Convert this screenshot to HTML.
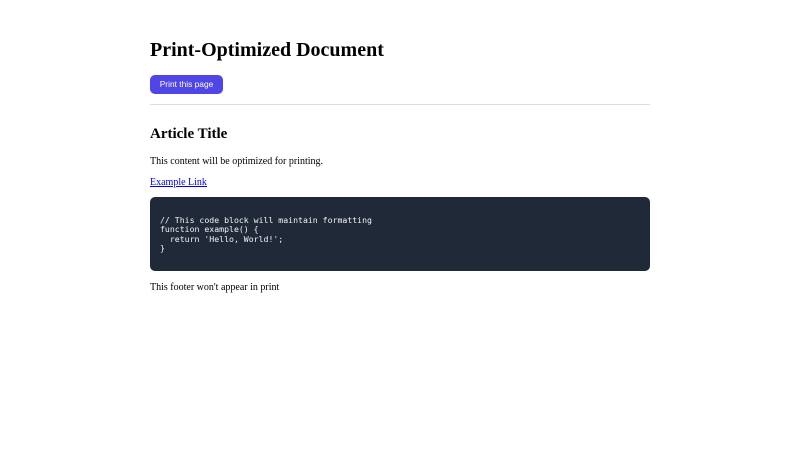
<!DOCTYPE html>
<html><head><style>
body{margin:0;background:#fff;font-family:"Liberation Serif",serif;color:#000}
.w{position:absolute;left:150px;width:500px;top:0}
h1{position:absolute;top:39px;left:0;margin:0;font-size:20px;font-weight:bold;white-space:nowrap}
.btn{position:absolute;top:75px;left:0;width:73px;height:19px;background:#4f46e5;border-radius:5px;color:#fff;font:8.4px "Liberation Sans",sans-serif;text-align:center;line-height:19px}
.hr{position:absolute;top:104px;left:0;width:500px;height:1px;background:#ddd}
h2{position:absolute;top:126px;left:0;margin:0;font-size:15px;font-weight:bold;white-space:nowrap}
.p{position:absolute;left:0;font-size:10px;white-space:nowrap}
a{color:#00e;text-decoration:underline}
pre{position:absolute;top:197px;left:0;width:500px;height:74px;box-sizing:border-box;margin:0;padding:19px 10px 0;background:#1f2937;color:#f3f4f6;border-radius:5px;font:8.2px/9.33px "DejaVu Sans Mono",monospace}
</style></head><body><div class="w">
<h1>Print-Optimized Document</h1>
<div class="btn">Print this page</div>
<div class="hr"></div>
<h2>Article Title</h2>
<div class="p" style="top:156px">This content will be optimized for printing.</div>
<div class="p" style="top:177px"><a>Example Link</a></div>
<pre>// This code block will maintain formatting
function example() {
  return 'Hello, World!';
}</pre>
<div class="p" style="top:282px">This footer won't appear in print</div>
</div></body></html>
